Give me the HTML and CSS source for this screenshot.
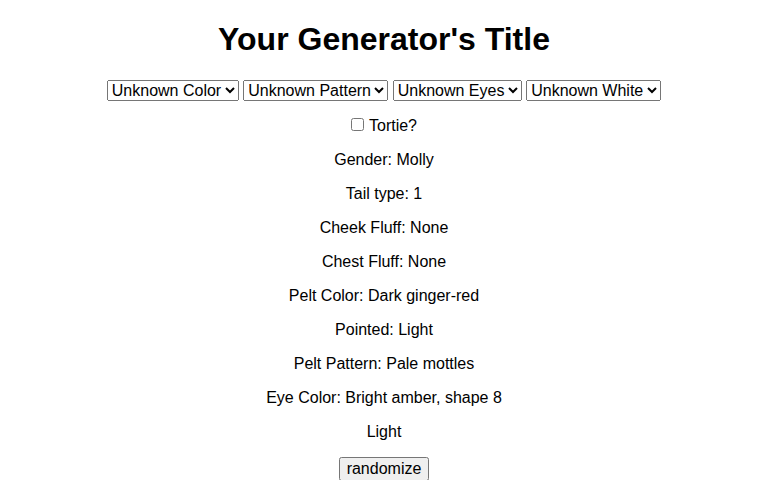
FILE: index.html
```html
<!DOCTYPE html>
<html lang="en">
<head>
  <meta charset="UTF-8">
  <title>Your Generator's Title</title>
  <link rel="stylesheet" href="styles.css">
</head>
<body>

  <h1>Your Generator's Title</h1>

  <div class="pickers">
    <select id="color">
      <option>Unknown Color</option>
    </select>
    <select id="pattern">
      <option>Unknown Pattern</option>
    </select>
    <select id="eyes">
      <option>Unknown Eyes</option>
    </select>
    <select id="white">
      <option>Unknown White</option>
    </select>
  </div>

  <p class="tortie"><input type="checkbox" id="tortie"><label for="tortie">Tortie?</label></p>

  <p id="gender">Gender: Molly</p>
  <p id="tail">Tail type: 1</p>
  <p id="cheek">Cheek Fluff: None</p>
  <p id="chest">Chest Fluff: None</p>
  <p id="pelt">Pelt Color: Dark ginger-red</p>
  <p id="pointed">Pointed: Light</p>
  <p id="pattern-text">Pelt Pattern: Pale mottles</p>
  <p id="eye-text">Eye Color: Bright amber, shape 8</p>
  <p id="white-text">Light</p>

  <button id="randomize">randomize</button>

</body>
</html>
```

FILE: styles.css
```css
body {
  font-family: "Liberation Sans", Arial, sans-serif;
  margin: 8px;
  text-align: center;
  color: #000;
  background: #fff;
}

h1 {
  font-size: 32px;
  margin: 13px 0 22px;
}

.pickers select {
  font-family: "Liberation Sans", Arial, sans-serif;
  font-size: 16px;
}

p {
  font-size: 16px;
  margin: 16px 0;
}

.tortie {
  margin-top: 14px;
}

.tortie label {
  margin-left: 2px;
  margin-right: 4px;
}

button {
  font-family: "Liberation Sans", Arial, sans-serif;
  font-size: 16px;
}
```
